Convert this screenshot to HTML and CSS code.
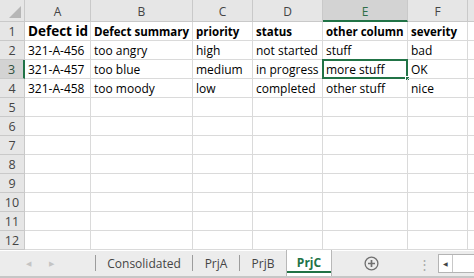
FILE: index.html
```html
<!DOCTYPE html>
<html lang="en">
<head>
  <meta charset="UTF-8" />
  <title>Defects - PrjC</title>
  <link rel="stylesheet" href="styles.css">
</head>
<body>
  <div class="sheet">
    <div class="corner"><span class="tri"></span></div>
    <div class="colhead">A</div>
    <div class="colhead">B</div>
    <div class="colhead">C</div>
    <div class="colhead">D</div>
    <div class="colhead selected">E</div>
    <div class="colhead">F</div>
    <div class="colhead"></div>

    <div class="rowhead">1</div>
    <div class="cell title">Defect id</div>
    <div class="cell bold">Defect summary</div>
    <div class="cell bold">priority</div>
    <div class="cell bold">status</div>
    <div class="cell bold">other column</div>
    <div class="cell bold">severity</div>
    <div class="cell"></div>

    <div class="rowhead">2</div>
    <div class="cell">321-A-456</div>
    <div class="cell">too angry</div>
    <div class="cell">high</div>
    <div class="cell">not started</div>
    <div class="cell">stuff</div>
    <div class="cell">bad</div>
    <div class="cell"></div>

    <div class="rowhead selected">3</div>
    <div class="cell">321-A-457</div>
    <div class="cell">too blue</div>
    <div class="cell">medium</div>
    <div class="cell">in progress</div>
    <div class="cell active">more stuff<span class="handle"></span></div>
    <div class="cell">OK</div>
    <div class="cell"></div>

    <div class="rowhead">4</div>
    <div class="cell">321-A-458</div>
    <div class="cell">too moody</div>
    <div class="cell">low</div>
    <div class="cell">completed</div>
    <div class="cell">other stuff</div>
    <div class="cell">nice</div>
    <div class="cell"></div>
  </div>

  <div class="tabbar">
    <div class="nav">
      <span class="arrow">&#9664;</span>
      <span class="arrow">&#9654;</span>
    </div>
    <div class="tab wide">Consolidated</div>
    <div class="tab">PrjA</div>
    <div class="tab">PrjB</div>
    <div class="tab current">PrjC</div>
    <div class="add">
      <svg width="15" height="15" viewBox="0 0 15 15">
        <circle cx="7.5" cy="7.5" r="6.4" fill="none" stroke="#6f6f6f" stroke-width="1.3"/>
        <path d="M7.5 4v7M4 7.5h7" stroke="#6f6f6f" stroke-width="1.7"/>
      </svg>
    </div>
    <div class="dots">&#8942;</div>
    <div class="hscroll">
      <span class="sbtn">&#9664;</span>
      <span class="track"></span>
    </div>
  </div>
  <div class="statusline"></div>

  <script>
    // pad the grid with the empty rows 5..12
    const sheet = document.querySelector(".sheet");
    for (let r = 5; r <= 12; r++) {
      const head = document.createElement("div");
      head.className = "rowhead";
      head.textContent = r;
      sheet.appendChild(head);
      for (let c = 0; c < 7; c++) {
        const cell = document.createElement("div");
        cell.className = "cell";
        sheet.appendChild(cell);
      }
    }
  </script>
</body>
</html>
```

FILE: styles.css
```css
* {
  box-sizing: border-box;
}

body {
  margin: 0;
  width: 474px;
  height: 278px;
  overflow: hidden;
  background: #ffffff;
  font-family: "Open Sans", Lato, sans-serif;
  color: #000;
}

.sheet {
  display: grid;
  grid-template-columns: 25px 66px 102px 60px 70px 85px 60px 1fr;
  grid-template-rows: 22px repeat(12, 19px);
  font-size: 12px;
}

.corner,
.colhead,
.rowhead {
  background: #e6e6e6;
  color: #444;
  border-right: 1px solid #c9c9c9;
  border-bottom: 1px solid #c9c9c9;
}

.corner {
  position: relative;
}

.tri {
  position: absolute;
  right: 3px;
  bottom: 3px;
  width: 0;
  height: 0;
  border-left: 12px solid transparent;
  border-bottom: 12px solid #b6b6b6;
}

.colhead {
  display: flex;
  align-items: center;
  justify-content: center;
  font-size: 12px;
  padding-top: 2px;
}

.colhead.selected {
  background: #d3d3d3;
  color: #2f6e48;
  border-bottom: 2px solid #217346;
  padding-top: 3px;
}

.rowhead {
  display: flex;
  align-items: center;
  justify-content: center;
  font-size: 12.5px;
  padding-top: 1px;
}

.rowhead.selected {
  background: #d3d3d3;
  color: #2f4f3c;
  border-right: 2px solid #217346;
}

.cell {
  border-right: 1px solid #dadada;
  border-bottom: 1px solid #dadada;
  padding: 1px 3px 0;
  line-height: 18px;
  white-space: nowrap;
  overflow: visible;
  position: relative;
}

.title {
  font-weight: bold;
  font-size: 13.5px;
  line-height: 18px;
  padding-top: 0;
}

.bold {
  font-weight: bold;
  font-size: 11.5px;
}

.active {
  border: 2px solid #217346;
  margin: -1px 0 0 -1px;
  padding: 0 2px;
  line-height: 17px;
}

.handle {
  position: absolute;
  right: -4px;
  bottom: -4px;
  width: 5px;
  height: 5px;
  background: #217346;
  border: 1px solid #fff;
}

.tabbar {
  display: flex;
  align-items: stretch;
  height: 25px;
  margin-top: 1px;
  background: #ececec;
  font-size: 12px;
  color: #444;
}

.nav {
  width: 96px;
  display: flex;
  align-items: center;
  gap: 18px;
  padding-left: 26px;
  border-right: 1px solid #9c9c9c;
  margin: 4px 0 5px;
}

.arrow {
  font-size: 7px;
  color: #c4c4c4;
}

.tab {
  width: 47px;
  display: flex;
  align-items: center;
  justify-content: center;
  margin: 4px 0 5px;
  border-right: 1px solid #9c9c9c;
}

.tab.wide {
  width: 97px;
}

.tab.current {
  width: 46px;
  margin: -1px 0 0 -1px;
  background: #fff;
  color: #217346;
  font-weight: bold;
  border-left: 1px solid #b8b8b8;
  border-right: 1px solid #b8b8b8;
  box-shadow: inset 0 -3px 0 #fff, inset 0 -5px 0 #217346;
  padding-bottom: 2px;
}

.add {
  width: 78px;
  display: flex;
  align-items: center;
  justify-content: center;
}

.dots {
  width: 28px;
  display: flex;
  align-items: center;
  justify-content: center;
  color: #a8a8a8;
  font-size: 13px;
}

.hscroll {
  flex: 1;
  display: flex;
  margin: 3px 0 3px;
  border: 1px solid #b4b4b4;
  border-right: none;
  background: #fff;
}

.sbtn {
  width: 14px;
  font-size: 6px;
  color: #444;
  display: flex;
  align-items: center;
  justify-content: center;
  border-right: 1px solid #c8c8c8;
}

.track {
  flex: 1;
}

.statusline {
  height: 3px;
  background: #c6c6c6;
}
```
